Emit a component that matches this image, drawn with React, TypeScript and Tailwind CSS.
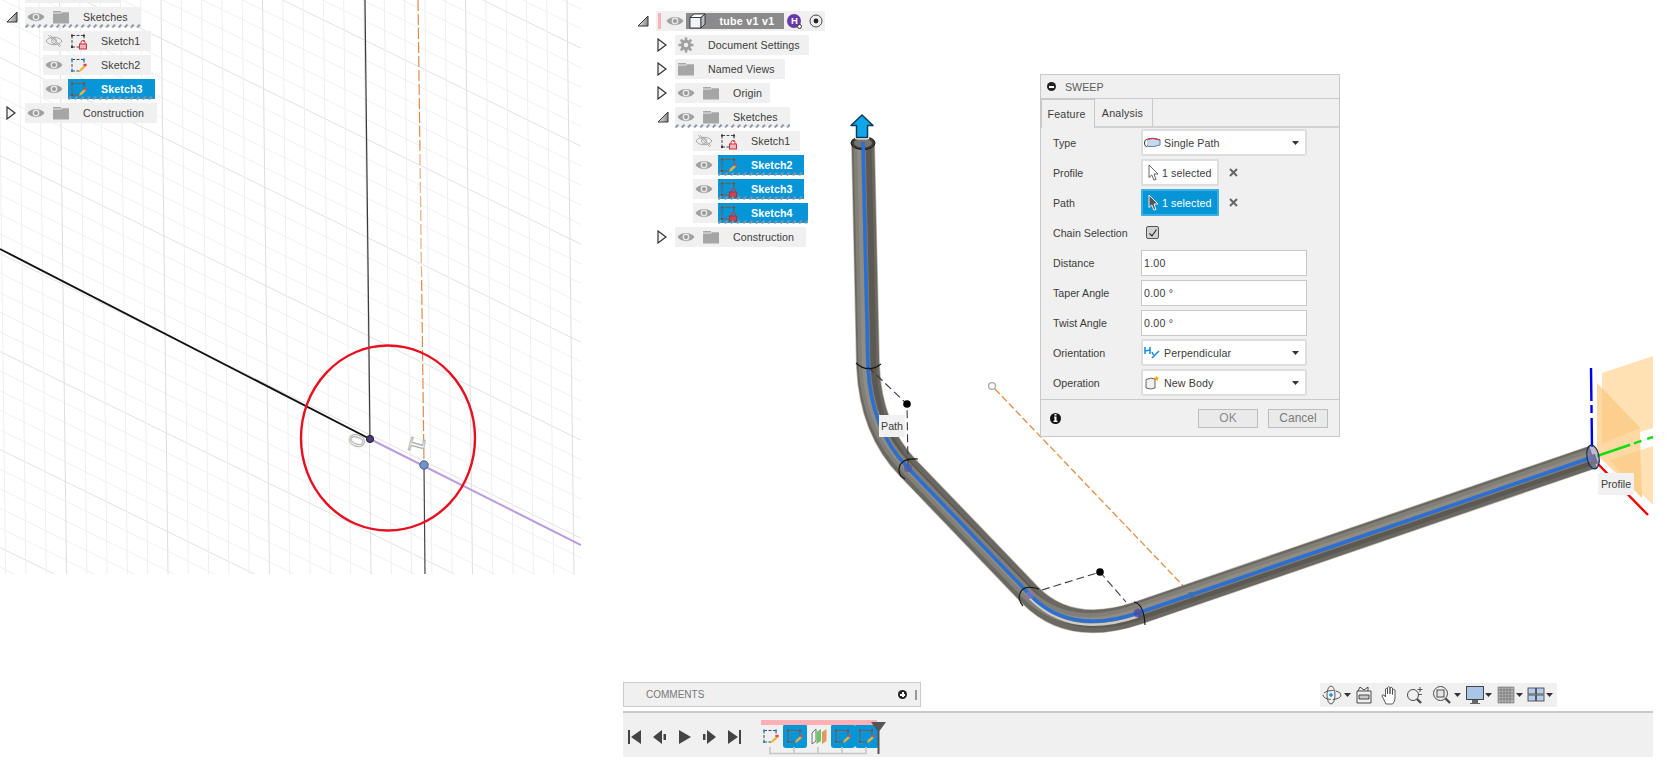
import React from "react";

const FONT = "font-['Liberation_Sans',Arial,sans-serif]";

const Eye = ({ off = false }: { off?: boolean }) =>
  off ? (
    <svg width="18" height="14" viewBox="0 0 18 14" fill="none">
      <path d="M1 7C4 2 14 2 17 7C14 12 4 12 1 7Z" stroke="#a5a5a5" strokeWidth="1" />
      <circle cx="9" cy="7" r="2.5" stroke="#a5a5a5" />
      <path d="M3 1L15 13M5 1L16 12" stroke="#a5a5a5" strokeWidth="0.8" />
    </svg>
  ) : (
    <svg width="18" height="12" viewBox="0 0 18 12">
      <path d="M0.5 6C4 0.5 14 0.5 17.5 6C14 11.5 4 11.5 0.5 6Z" fill="#a0a0a0" />
      <circle cx="9" cy="6" r="3.4" fill="#e8e8e8" />
      <circle cx="9" cy="6" r="2" fill="#9a9a9a" />
    </svg>
  );

const Folder = () => (
  <svg width="16" height="14" viewBox="0 0 16 14">
    <path d="M0 1H8V2.6H0Z" fill="#a8a8a8" />
    <path d="M0 3.6H8L9 2.2H16V13.5H0Z" fill="#a6a6a6" />
  </svg>
);

const Gear = () => (
  <svg width="16" height="16" viewBox="0 0 16 16">
    <g stroke="#a0a0a0" strokeWidth="2.6">
      <path d="M8 0.5V15.5M0.5 8H15.5M2.7 2.7L13.3 13.3M13.3 2.7L2.7 13.3" />
    </g>
    <circle cx="8" cy="8" r="5.2" fill="#a0a0a0" />
    <circle cx="8" cy="8" r="2.2" fill="#f0f0f0" />
  </svg>
);

const SketchIcon = ({ kind, selected }: { kind: "lock" | "pencil"; selected?: boolean }) => {
  const c = selected ? "#7d5a4c" : "#333";
  const corner = selected ? "#7d4a3c" : "#1f8fe0";
  return (
    <svg width="16" height="17" viewBox="0 0 16 17" fill="none">
      <path d="M1 2.5H13M1 2.5V14M1 14H9M13 2.5V9" stroke={c} strokeWidth="0.9" strokeDasharray={selected ? "none" : "3 1.5"} />
      {[[0, 1.5], [12, 1.5], [0, 13]].map(([x, y]) => (
        <rect key={x + "-" + y} x={x} y={y} width="2" height="2" fill={kind === "pencil" ? corner : selected ? "#7d4a3c" : "#333"} />
      ))}
      {kind === "lock" ? (
        <g>
          <path d="M10 11V9.5A2 2 0 0 1 14 9.5V11" stroke="#d8333f" strokeWidth="1" />
          <rect x="8.5" y="11" width="7" height="5" fill={selected ? "#c8444e" : "#f0b4b8"} stroke="#c2222e" strokeWidth="0.9" />
        </g>
      ) : (
        <g>
          <path d="M8 15L9 12L13.5 8L15 9.7L10.7 13.8Z" fill="#f0b43c" />
          <rect x="13.2" y="6.8" width="2.4" height="2.4" fill="#e2434c" />
        </g>
      )}
    </svg>
  );
};

const TwistOpen = () => (
  <svg width="12" height="12" viewBox="0 0 12 12">
    <defs>
      <linearGradient id="twistfill" x1="0" x2="1" y1="0" y2="0">
        <stop offset="0" stopColor="#eeeeee" />
        <stop offset="1" stopColor="#8a8a8a" />
      </linearGradient>
    </defs>
    <path d="M1 11L11 1V11Z" fill="url(#twistfill)" stroke="#333" strokeWidth="1" />
  </svg>
);

const TwistClosed = () => (
  <svg width="10" height="14" viewBox="0 0 10 14">
    <path d="M1 1L9 7L1 13Z" fill="#f4f4f4" stroke="#333" strokeWidth="1.2" />
  </svg>
);

const Hatch = () => (
  <svg className="absolute bottom-[-1px] left-0" width="100%" height="4">
    <defs>
      <pattern id="hatchp" width="6.2" height="4" patternUnits="userSpaceOnUse">
        <path d="M0.6 3.6L3.2 0.6" stroke="#8a94a6" strokeWidth="1.9" />
      </pattern>
    </defs>
    <rect x="0" y="0" width="100%" height="4" fill="url(#hatchp)" />
  </svg>
);

type RowProps = {
  margin: string;
  twist?: "open" | "closed";
  twistWidth?: string;
  width: string;
  eye?: boolean | "off";
  icon: React.ReactNode;
  label: string;
  selected?: boolean;
  hatch?: boolean;
};

const Row = ({ margin, twist, twistWidth = "w-[18px]", width, eye, icon, label, selected, hatch }: RowProps) => (
  <div className={`flex h-5 items-center ${margin}`}>
    {twist && (
      <div className={`flex h-5 items-center ${twistWidth}`}>
        {twist === "open" ? <TwistOpen /> : <TwistClosed />}
      </div>
    )}
    <div className={`relative flex h-5 items-center bg-[#f0f0f0] ${width}`}>
      {eye && (
        <div className="flex h-5 w-[25px] shrink-0 items-center pl-[2px]">
          <Eye off={eye === "off"} />
        </div>
      )}
      <div className={`relative flex h-5 flex-1 items-center pl-[3px] ${selected ? "bg-[#0696d7]" : ""}`}>
        <div className="flex w-4 shrink-0 justify-center">{icon}</div>
        <span className={`ml-[14px] whitespace-nowrap text-[10.67px] tracking-[0.1px] ${selected ? "font-bold text-white" : "text-[#3c3c3c]"}`}>
          {label}
        </span>
        {selected && <Hatch />}
      </div>
      {hatch && <Hatch />}
    </div>
  </div>
);

const verticals = Array.from({ length: 34 }, (_, i) => i - 3);
const slants = Array.from({ length: 60 }, (_, i) => i - 18);

const GridCanvas = () => (
  <svg className="absolute left-0 top-0" width="581" height="574" viewBox="0 0 581 574">
    {slants.map((i) => {
      const c = 57.5 + i * 19.6;
      return <line key={"s" + i} x1="0" y1={c} x2="585" y2={c + 0.49 * 585} stroke={(i + 100) % 5 === 0 ? "#e2e2e2" : "#f1f1f1"} strokeWidth="1" />;
    })}
    {verticals.map((i) => {
      const x = 161 + (i - 8) * 20.3;
      return <line key={"v" + i} x1={x} y1="0" x2={x + 7} y2="574" stroke={(i + 100) % 5 === 3 ? "#dedede" : "#efefef"} strokeWidth="1" />;
    })}
    <line x1="365" y1="0" x2="370" y2="439" stroke="#3a3a3a" strokeWidth="1.2" />
    <line x1="0" y1="249" x2="370" y2="439" stroke="#151010" strokeWidth="1.9" />
    <line x1="370" y1="439" x2="581" y2="545" stroke="#b79ce0" strokeWidth="2" />
    <line x1="424" y1="465" x2="425" y2="574" stroke="#444" strokeWidth="1.2" />
    <line x1="418" y1="0" x2="424" y2="465" stroke="#e08a4a" strokeWidth="1.2" strokeDasharray="11 3" />
    <line x1="420" y1="150" x2="422" y2="280" stroke="#ffffff" strokeWidth="1.4" strokeOpacity="0.4" />
    <ellipse cx="388" cy="438" rx="87" ry="92.5" fill="none" stroke="#e8101f" strokeWidth="2.4" />
    <text x="0" y="0" transform="translate(350 438) rotate(110) scale(1.1 1)" fontFamily="DejaVu Sans" fontSize="20" fill="#ffffff" stroke="#b4b4b4" strokeWidth="1" textAnchor="middle">0</text>
    <text x="0" y="0" transform="translate(410 443) rotate(105) scale(1.5 1)" fontFamily="DejaVu Sans" fontSize="20" fill="#ffffff" stroke="#b4b4b4" strokeWidth="1" textAnchor="middle">1</text>
    <circle cx="370" cy="439" r="3.6" fill="#4b3a78" stroke="#222" strokeWidth="1" />
    <circle cx="424" cy="465" r="4.2" fill="#6d94cc" stroke="#4a5a70" strokeWidth="1" />
  </svg>
);

const TUBE = "M863 142L868 367Q871 430 908 468L1030 595Q1070 636 1138 613L1593 457";

const TubeScene = () => (
  <svg className="absolute inset-0" width="1085" height="682" viewBox="585 0 1085 682" fill="none">
    <polygon points="1602,373 1653,356 1653,428 1602,444" fill="#ffe1b3" />
    <polygon points="1610,460 1653,446 1653,505 1640,492" fill="#ffe1b3" />
    <polygon points="1597,383 1640,428 1642,498 1597,455" fill="#fed9a3" />
    <polygon points="1602,388 1640,428 1602,444" fill="#fdcf8e" />
    <polygon points="1610,460 1640,450 1642,498" fill="#fdcf8e" />
    <path d="M1591 368L1592 447" stroke="#0000f0" strokeWidth="2.4" strokeDasharray="33 4 8 5 40" />
    <path d="M1597 456L1653 437" stroke="#14dc14" strokeWidth="2.4" strokeDasharray="35 4 8 6 20" />
    <path d="M1598 464L1648 515" stroke="#f00000" strokeWidth="2.4" />

    <path d="M995 389L1190 593" stroke="#e4934f" strokeWidth="1.4" strokeDasharray="7 3" />
    <circle cx="992" cy="386" r="3.4" fill="#fff" stroke="#a9a9a9" strokeWidth="1.4" />

    <path d={TUBE} stroke="#8a887f" strokeWidth="24" strokeOpacity="0.55" />
    <path d={TUBE} stroke="#6a6860" strokeWidth="22.5" />
    <path d={TUBE} stroke="#5b5952" strokeWidth="10" transform="translate(3.5 1.5)" />
    <path d={TUBE} stroke="#827f76" strokeWidth="12" transform="translate(-3.5 -2)" />
    <path d={TUBE} stroke="#94928a" strokeWidth="4" transform="translate(-4 -2)" strokeOpacity="0.7" />
    <path d="M1030 595Q1070 636 1138 613" stroke="#dedcd4" strokeWidth="2.4" transform="translate(0 3.5)" strokeOpacity="0.85" />
    <path d={TUBE} stroke="#2c6fd2" strokeWidth="3.6" />

    <path d="M868 367L907 404L908 468" stroke="#3b3b3b" strokeWidth="1.1" strokeDasharray="8 4" />
    <path d="M1042 590L1100 572L1126 602" stroke="#3b3b3b" strokeWidth="1.1" strokeDasharray="8 4" />
    <circle cx="907" cy="404" r="3.8" fill="#000" />
    <circle cx="1100" cy="572" r="3.8" fill="#000" />

    <path d="M856 363Q868 374 881 364" stroke="#111" strokeWidth="1.1" />
    <path d="M918 459Q899 458 899 470Q899 476 905 479" stroke="#111" strokeWidth="1.1" />
    <circle cx="908" cy="468" r="4" fill="#4b5aa8" fillOpacity="0.75" />
    <path d="M1039 589Q1020 583 1019 598Q1020 603 1023 606" stroke="#111" strokeWidth="1.1" />
    <circle cx="1030" cy="595" r="4" fill="#8a78c8" fillOpacity="0.55" />
    <path d="M1134 602Q1144 604 1145 625" stroke="#111" strokeWidth="1.1" />
    <circle cx="1138" cy="613" r="4.5" fill="#4b4aa0" fillOpacity="0.75" />
    <circle cx="1191" cy="595" r="3" fill="#3b6fb0" />

    <ellipse cx="863" cy="143" rx="12" ry="6.5" fill="#3f3e3a" stroke="#111" strokeWidth="1" />
    <ellipse cx="863" cy="143" rx="9" ry="4.5" fill="#77756d" />
    <path d="M863 142L863.3 152" stroke="#2c6fd2" strokeWidth="3.6" />
    <path d="M862 115L872 125H867V137H857V125H851Z" fill="#fff" stroke="#fff" strokeWidth="5" strokeLinejoin="round" />
    <path d="M862 115L873 125.5H867.5V137.5H856.5V125.5H851Z" fill="#10a6ea" stroke="#0d3a55" strokeWidth="1.5" strokeLinejoin="round" />

    <ellipse cx="1593" cy="457" rx="6" ry="12" fill="#8d84b0" fillOpacity="0.55" stroke="#14304f" strokeWidth="1.2" transform="rotate(-10 1593 457)" />
  </svg>
);

const Caret = ({ color = "#333" }: { color?: string }) => (
  <svg width="7" height="4" viewBox="0 0 7 4">
    <path d="M0 0H7L3.5 4Z" fill={color} />
  </svg>
);

const CursorIcon = ({ fill, stroke }: { fill: string; stroke: string }) => (
  <svg width="11" height="17" viewBox="0 0 11 17">
    <path d="M1 1L10 10H6L8 15.5L5.8 16L3.8 11L1 13.5Z" fill={fill} stroke={stroke} strokeWidth="0.9" strokeLinejoin="round" />
  </svg>
);

const DialogRow = ({ label, children }: { label: string; children: React.ReactNode }) => (
  <div className="flex h-[27px] items-center">
    <div className="w-[100px] shrink-0 pl-[12px] text-[10.67px] text-[#3c3c3c]">{label}</div>
    {children}
  </div>
);

const SelectField = ({ icon, label }: { icon: React.ReactNode; label: string }) => (
  <div className="flex h-[27px] w-[166px] items-center rounded-[2px] border-2 border-[#dedede] bg-white pr-[6px]">
    <div className="flex w-[18px] shrink-0 justify-center">{icon}</div>
    <span className="ml-[3px] flex-1 text-[10.67px] tracking-[0.1px] text-[#3c3c3c]">{label}</span>
    <Caret />
  </div>
);

const Selection = ({ active }: { active?: boolean }) => (
  <>
    <div className={`flex h-[27px] w-[78px] items-center rounded-[1px] border-2 pl-[5px] text-[10.67px] ${active ? "border-[#39b0e4] bg-[#0696d7] text-white" : "border-[#dedede] bg-white text-[#3c3c3c]"}`}>
      <CursorIcon fill={active ? "#555" : "#fff"} stroke={active ? "#fff" : "#555"} />
      <span className="ml-[3px] whitespace-nowrap tracking-[0.1px]">1 selected</span>
    </div>
    <svg className="ml-[10px]" width="9" height="9" viewBox="0 0 9 9">
      <path d="M1 1L8 8M8 1L1 8" stroke="#666" strokeWidth="2" />
    </svg>
  </>
);

const TextField = ({ value }: { value: string }) => (
  <div className="flex h-[26px] w-[166px] items-center border border-[#c8c8c8] bg-white pl-[2px] text-[10.67px] tracking-[0.2px] text-[#3c3c3c]">{value}</div>
);

const SweepDialog = () => (
  <div className="absolute left-[455px] top-[74px] z-20 flex h-[363px] w-[300px] flex-col border border-[#c9c9c9] bg-[#f0f0f0]">
    <div className="flex h-[24px] shrink-0 items-center border-b border-[#c9c9c9] pl-[6px]">
      <div className="relative h-[9px] w-[9px] rounded-full bg-[#222]">
        <div className="absolute left-[2px] top-[3.5px] h-[2px] w-[5px] bg-white" />
      </div>
      <span className="ml-[9px] text-[10.67px] text-[#5c5c5c]">SWEEP</span>
    </div>
    <div className="flex h-[29px] shrink-0 border-b-2 border-[#d2d2d2]">
      <div className="-mb-[2px] flex h-[29px] w-[54px] items-center justify-center rounded-t-[1px] border-x border-t border-[#c9c9c9] bg-[#f0f0f0] pr-[3px] text-[10.67px] tracking-[0.2px] text-[#3c3c3c]">Feature</div>
      <div className="flex h-[27px] w-[58px] items-center justify-center border-r border-[#c9c9c9] pr-[2px] text-[10.67px] tracking-[0.2px] text-[#3c3c3c]">Analysis</div>
    </div>
    <div className="flex flex-1 flex-col gap-[3px] pt-[1px]">
      <DialogRow label="Type">
        <SelectField
          label="Single Path"
          icon={
            <svg width="17" height="11" viewBox="0 0 17 11" fill="none">
              <ellipse cx="2.5" cy="6" rx="2" ry="3.5" stroke="#333" />
              <path d="M3 2.5Q9 0 16 3V8Q9 10.5 4 9.5" fill="#c6d8ee" stroke="#5a7fb0" />
              <path d="M3 2.5Q9 0 16 3" stroke="#d8333f" strokeWidth="1.2" />
            </svg>
          }
        />
      </DialogRow>
      <DialogRow label="Profile">
        <Selection />
      </DialogRow>
      <DialogRow label="Path">
        <Selection active />
      </DialogRow>
      <DialogRow label="Chain Selection">
        <div className="ml-[5px] flex h-[13px] w-[13px] items-center justify-center rounded-[2px] border border-[#555] bg-[#d2d2d2]">
          <svg width="10" height="10" viewBox="0 0 10 10" fill="none">
            <path d="M1.5 5.5L4 8L8.5 1.5" stroke="#222" strokeWidth="1.1" />
          </svg>
        </div>
      </DialogRow>
      <DialogRow label="Distance">
        <TextField value="1.00" />
      </DialogRow>
      <DialogRow label="Taper Angle">
        <TextField value="0.00 °" />
      </DialogRow>
      <DialogRow label="Twist Angle">
        <TextField value="0.00 °" />
      </DialogRow>
      <DialogRow label="Orientation">
        <SelectField
          label="Perpendicular"
          icon={
            <svg width="16" height="13" viewBox="0 0 16 13" fill="none" stroke="#1f8fe0" strokeWidth="1.6">
              <path d="M1 1V8M6 1V8M1 5L6 4M8 6L9.5 9M15 5L8 12" />
            </svg>
          }
        />
      </DialogRow>
      <DialogRow label="Operation">
        <SelectField
          label="New Body"
          icon={
            <svg width="15" height="15" viewBox="0 0 15 15">
              <path d="M1 4.5Q6 2 10 4V13Q6 15 1 13Z" fill="#efefef" stroke="#555" strokeWidth="0.9" />
              <path d="M11.5 0.5L12.3 2.5L14.5 3L12.6 4.2L13 6.2L11.5 5L10 6.2L10.4 4.2L8.5 3L10.7 2.5Z" fill="#f5a300" />
            </svg>
          }
        />
      </DialogRow>
    </div>
    <div className="flex h-[37px] shrink-0 items-center border-t border-[#c9c9c9] pl-[9px] pr-[11px]">
      <div className="flex h-[11px] w-[11px] items-center justify-center rounded-full bg-[#111]">
        <svg width="5" height="8" viewBox="0 0 5 8" fill="#fff">
          <rect x="1.5" y="0" width="2" height="1.6" />
          <path d="M1 2.6H3.5V6.8H4.5V8H0.5V6.8H1.5V3.6H1Z" />
        </svg>
      </div>
      <div className="ml-auto flex gap-[10px]">
        <div className="flex h-[19px] w-[60px] items-center justify-center border border-[#bdbdbd] bg-[#eaeaea] text-[12px] text-[#8a8a8a]">OK</div>
        <div className="flex h-[19px] w-[60px] items-center justify-center border border-[#bdbdbd] bg-[#eaeaea] text-[12px] text-[#7a7a7a]">Cancel</div>
      </div>
    </div>
  </div>
);

const FloatLabel = ({ pos, text }: { pos: string; text: string }) => (
  <div className={`absolute z-10 flex h-[22px] items-center justify-center bg-[#f1f1f1] text-[10.67px] text-[#3c3c3c] ${pos}`}>{text}</div>
);

const BrowserRight = () => (
  <div className="relative z-10 flex w-[240px] flex-col gap-1 pl-[52px] pt-[11px]">
    <div className="flex h-5 items-center">
      <div className="flex h-5 w-[20px] items-center"><TwistOpen /></div>
      <div className="flex h-5 w-[174px] items-center bg-[#f0f0f0] pl-[2px]">
        <div className="h-4 w-[3px] bg-[#ffb0b0]" />
        <div className="ml-[5px] w-[20px]"><Eye /></div>
        <div className="flex h-4 w-[98px] items-center bg-[#8b8b8b]">
          <svg className="ml-[3px] shrink-0" width="17" height="16" viewBox="0 0 17 16">
            <path d="M1 4.5H12V15H1Z" fill="#f1f3f6" stroke="#222" strokeWidth="0.8" />
            <path d="M1 4.5L5 1H16L12 4.5Z" fill="#ffffff" stroke="#222" strokeWidth="0.8" />
            <path d="M12 4.5L16 1V11L12 15Z" fill="#b9bec6" stroke="#222" strokeWidth="0.8" />
          </svg>
          <span className="ml-[13px] whitespace-nowrap text-[10.67px] font-bold tracking-[0.3px] text-white">tube v1 v1</span>
        </div>
        <div className="relative ml-[3px] flex h-[14px] w-[14px] items-center justify-center rounded-full bg-[#6a3aa8] text-[9.5px] font-bold text-white">
          H
          <div className="absolute -bottom-[1px] -right-[1px] h-[5px] w-[5px] rounded-full border border-[#333] bg-white" />
        </div>
        <svg className="ml-[8px]" width="14" height="14" viewBox="0 0 14 14" fill="none">
          <circle cx="7" cy="7" r="6" stroke="#333" strokeWidth="0.9" />
          <circle cx="7" cy="7" r="2.4" fill="#222" />
        </svg>
      </div>
    </div>
    <Row margin="ml-[20px]" twist="closed" width="w-[134px]" icon={<Gear />} label="Document Settings" />
    <Row margin="ml-[20px]" twist="closed" width="w-[110px]" icon={<Folder />} label="Named Views" />
    <Row margin="ml-[20px]" twist="closed" width="w-[95px]" eye icon={<Folder />} label="Origin" />
    <Row margin="ml-[20px]" twist="open" width="w-[115px]" eye icon={<Folder />} label="Sketches" hatch />
    <Row margin="ml-[56px]" width="w-[107px]" eye="off" icon={<SketchIcon kind="lock" />} label="Sketch1" />
    <Row margin="ml-[56px]" width="w-[111px]" eye selected icon={<SketchIcon kind="pencil" selected />} label="Sketch2" />
    <Row margin="ml-[56px]" width="w-[111px]" eye selected icon={<SketchIcon kind="lock" selected />} label="Sketch3" />
    <Row margin="ml-[56px]" width="w-[115px]" eye selected icon={<SketchIcon kind="lock" selected />} label="Sketch4" />
    <Row margin="ml-[20px]" twist="closed" width="w-[131px]" eye icon={<Folder />} label="Construction" />
  </div>
);

const BrowserLeft = () => (
  <div className="relative z-10 flex flex-col gap-1">
    <div className="ml-[25px] h-[3px] w-[96px] bg-[#f0f0f0]" />
    <Row margin="ml-[6px]" twist="open" twistWidth="w-[19px]" width="w-[116px]" eye icon={<Folder />} label="Sketches" hatch />
    <Row margin="ml-[43px]" width="w-[108px]" eye="off" icon={<SketchIcon kind="lock" />} label="Sketch1" />
    <Row margin="ml-[43px]" width="w-[108px]" eye icon={<SketchIcon kind="pencil" />} label="Sketch2" />
    <Row margin="ml-[43px]" width="w-[112px]" eye selected icon={<SketchIcon kind="pencil" selected />} label="Sketch3" />
    <Row margin="ml-[6px]" twist="closed" twistWidth="w-[19px]" width="w-[132px]" eye icon={<Folder />} label="Construction" />
  </div>
);

const CommentsBar = () => (
  <div className="flex h-[25px] w-[298px] items-center border border-[#cacaca] bg-[#f0f0f0] pl-[22px] pr-[3px] text-[10px] text-[#777]">
    <span>COMMENTS</span>
    <div className="relative ml-auto h-[9px] w-[9px] rounded-full bg-[#222]">
      <div className="absolute left-[2px] top-[3.5px] h-[2px] w-[5px] bg-white" />
      <div className="absolute left-[3.5px] top-[2px] h-[5px] w-[2px] bg-white" />
    </div>
    <div className="ml-[8px] h-[10px] w-[2px] border-x border-[#999]" />
  </div>
);

const navStroke = "#4a4a4a";

const NavBar = () => (
  <div className="mt-[1px] flex h-[24px] w-[237px] items-center bg-[#f0f0f0] pl-[2px]">
    <svg width="20" height="20" viewBox="0 0 20 20" fill="none" stroke={navStroke} strokeWidth="0.9">
      <ellipse cx="10" cy="10" rx="9" ry="4.5" strokeDasharray="10 2" />
      <ellipse cx="9" cy="10" rx="4" ry="9" />
      <path d="M7 10H11M9 8V12" stroke="#1f8fe0" strokeWidth="1.5" />
    </svg>
    <div className="ml-[2px] flex w-[7px]"><Caret /></div>
    <svg className="ml-[3px]" width="20" height="20" viewBox="0 0 20 20" fill="none" stroke={navStroke} strokeWidth="1">
      <path d="M3 6H17V18H3Z" />
      <path d="M5 10H15V14H5Z" fill="#c9c9c9" />
      <path d="M4 6L6 2L10 5L14 2V6" />
    </svg>
    <svg className="ml-[6px]" width="20" height="20" viewBox="0 0 20 20" fill="#fff" stroke={navStroke} strokeWidth="0.9" strokeLinejoin="round">
      <path d="M6 19L2 11Q2 9.5 4 10L5.5 12V4Q6 2.5 7.5 4V9V2.5Q8.5 1 10 2.5V9V3Q11 1.5 12.5 3V9.5V5Q13.5 3.5 15 5V13Q15 17 12.5 19Z" />
    </svg>
    <svg className="ml-[5px]" width="20" height="20" viewBox="0 0 20 20" fill="none" stroke={navStroke}>
      <circle cx="8" cy="10" r="5.5" strokeWidth="1" />
      <path d="M12 14L16 18" strokeWidth="2.4" />
      <path d="M15 2V7M12.5 4.5H17.5M13 9.5H17" strokeWidth="0.9" />
    </svg>
    <svg className="ml-[7px]" width="20" height="20" viewBox="0 0 20 20" fill="none" stroke={navStroke}>
      <circle cx="8.5" cy="8.5" r="7" strokeWidth="1" />
      <rect x="5" y="5" width="7" height="7" strokeWidth="1" fill="#e6e6e6" />
      <path d="M13.5 13.5L18 18" strokeWidth="2.4" />
    </svg>
    <div className="ml-[2px] flex w-[7px]"><Caret /></div>
    <svg className="ml-[4px]" width="20" height="20" viewBox="0 0 20 20">
      <rect x="1.5" y="1.5" width="17" height="13" fill="#a9c6e8" stroke="#444" strokeWidth="1" />
      <path d="M7 15H13V18H15V19H5V18H7Z" fill="#666" />
    </svg>
    <div className="flex w-[7px]"><Caret /></div>
    <svg className="ml-[4px]" width="20" height="20" viewBox="0 0 20 20" fill="#b4b4b4" stroke="#555" strokeWidth="0.5">
      <rect x="2" y="2" width="16" height="16" />
      <path d="M5 2V18M8 2V18M11 2V18M14 2V18M2 5H18M2 8H18M2 11H18M2 14H18" />
    </svg>
    <div className="flex w-[7px]"><Caret /></div>
    <svg className="ml-[3px]" width="20" height="20" viewBox="0 0 20 20" fill="#b4cdea" stroke="#4a4a4a" strokeWidth="0.9">
      <rect x="2" y="3" width="7.5" height="6" />
      <rect x="10.5" y="3" width="7.5" height="6" />
      <rect x="2" y="10" width="7.5" height="6" />
      <rect x="10.5" y="10" width="7.5" height="6" />
    </svg>
    <div className="flex w-[7px]"><Caret /></div>
  </div>
);

const CTRL = "#444";
const Controls = () => (
  <div className="ml-[5px] mt-[17px] flex gap-[12px]">
    {[
      "M0 0H2V14H0ZM13 0V14L3 7Z",
      "M0 7L9 0V14ZM10.5 4H13V10H10.5Z",
      "M1 0L13 7L1 14Z",
      "M0 4H2.5V10H0ZM4 0L13 7L4 14Z",
      "M0 0L10 7L0 14ZM11 0H13V14H11Z",
    ].map((d) => (
      <svg key={d} width="13" height="14" viewBox="0 0 13 14">
        <path d={d} fill={CTRL} />
      </svg>
    ))}
  </div>
);

const TlSketch = ({ selected }: { selected?: boolean }) => (
  <div className={`flex h-6 w-6 items-center justify-center rounded-[3px] ${selected ? "bg-[#0696d7]" : ""}`}>
    <SketchIcon kind="pencil" selected={selected} />
  </div>
);

const Timeline = () => (
  <div className="mt-[4px] flex h-[46px] w-[1030px] items-start border-t-2 border-[#c9c9c9] bg-[#f0f0f0]">
    <Controls />
    <div className="relative ml-[18px] mt-[11px] flex">
      <div className="absolute -top-[4px] left-[2px] h-[5px] w-[116px] bg-[#ffb0b4]" />
      <svg className="absolute left-[10px] top-[23px]" width="100" height="8" viewBox="0 0 100 8" fill="none" stroke="#c6c6c6" strokeWidth="1.6">
        <path d="M1 0V6.5H97V0M25 0V6.5M49 0V6.5M73 0V6.5" />
      </svg>
      <TlSketch />
      <TlSketch selected />
      <div className="flex h-6 w-6 items-center justify-center">
        <svg width="16" height="17" viewBox="0 0 16 17">
          <path d="M1 5L5 1V13L1 16Z" fill="#f2f2f2" stroke="#555" strokeWidth="0.8" />
          <path d="M5.5 4L10 1V13L5.5 16Z" fill="#6cc46c" />
          <path d="M11 4L15.5 1V13L11 16Z" fill="#e09a5c" />
        </svg>
      </div>
      <TlSketch selected />
      <TlSketch selected />
      <svg className="absolute -top-[2px] left-[112px]" width="15" height="32" viewBox="0 0 15 32">
        <path d="M0 0H15L8.5 9V32H6.5V9Z" fill="#555" />
      </svg>
    </div>
  </div>
);

export default function App() {
  return (
    <div className={`flex h-[775px] w-[1670px] overflow-hidden bg-white ${FONT}`}>
      <div className="relative h-[574px] w-[585px] shrink-0 overflow-hidden">
        <GridCanvas />
        <BrowserLeft />
      </div>
      <div className="flex flex-1 flex-col">
        <div className="relative h-[682px] shrink-0">
          <TubeScene />
          <BrowserRight />
          <SweepDialog />
          <FloatLabel pos="left-[294px] top-[415px] w-[26px]" text="Path" />
          <FloatLabel pos="left-[1013px] top-[473px] w-[36px]" text="Profile" />
        </div>
        <div className="ml-[38px] flex flex-col">
          <div className="flex items-start justify-between pr-[113px]">
            <CommentsBar />
            <NavBar />
          </div>
          <Timeline />
        </div>
      </div>
    </div>
  );
}
